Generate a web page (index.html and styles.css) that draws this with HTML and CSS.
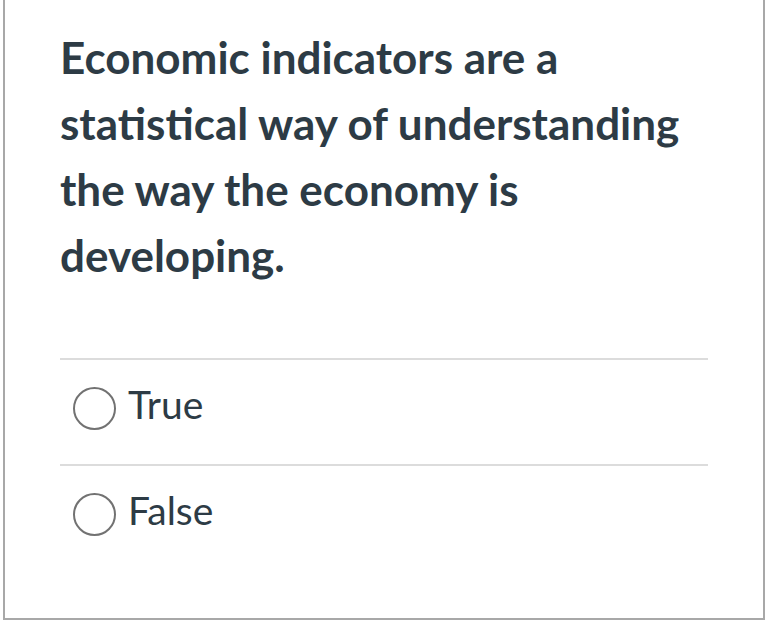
FILE: index.html
```html
<!DOCTYPE html>
<html lang="en">
<head>
<meta charset="utf-8">
<title>Quiz question</title>
<link rel="stylesheet" href="styles.css">
</head>
<body>
<div class="question">
  <div class="question-text">Economic indicators are a statistical way of understanding the way the economy is developing.</div>
  <div class="answers">
    <label class="answer"><span class="radio"></span><span class="answer-label">True</span></label>
    <label class="answer"><span class="radio"></span><span class="answer-label">False</span></label>
  </div>
</div>
</body>
</html>
```
FILE: styles.css
```css
html, body {
  margin: 0;
  padding: 0;
  background: #ffffff;
}
body {
  font-family: Lato, "Noto Sans", sans-serif;
  color: #2d3b45;
}
.question {
  margin-left: 3px;
  width: 762px;
  height: 620px;
  box-sizing: border-box;
  border: 2px solid #a8a8a8;
  border-top: 0;
  padding: 24px 55px 0 55px;
}
.question-text {
  font-size: 44px;
  font-weight: 700;
  line-height: 66px;
  margin-bottom: 70px;
}
.answer {
  display: flex;
  align-items: flex-start;
  border-top: 2px solid #dcdcdc;
  padding: 20px 0 34px 13px;
}
.radio {
  flex: none;
  width: 43px;
  height: 43px;
  box-sizing: border-box;
  border: 2.5px solid #727272;
  border-radius: 50%;
  margin-top: 7px;
  margin-right: 12px;
}
.answer-label {
  font-size: 39px;
  line-height: 48px;
  font-weight: 400;
}
```
